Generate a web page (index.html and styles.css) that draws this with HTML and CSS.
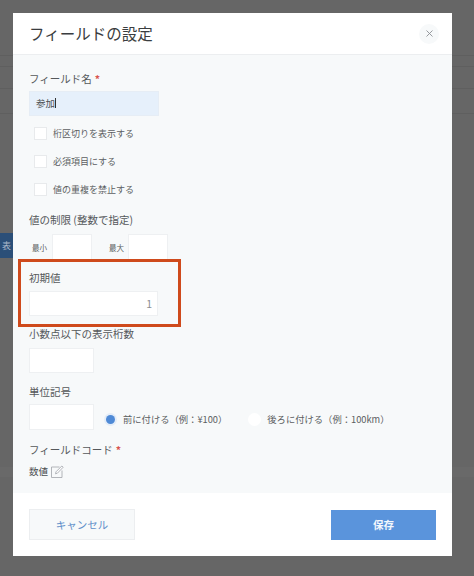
FILE: index.html
```html
<!DOCTYPE html>
<html lang="ja">
<head>
    <meta charset="UTF-8">
    <title>フィールドの設定</title>
    <link rel="stylesheet" href="styles.css">
</head>
<body>

    <!-- 背景の画面 -->
    <div class="backdrop">
        <div class="bg-line bg-line-1"></div>
        <div class="bg-line bg-line-2"></div>
        <div class="bg-line bg-line-5"></div>
        <div class="bg-line bg-line-3"></div>
        <div class="bg-button">表</div>
        <div class="bg-line bg-line-4"></div>
    </div>

    <div class="dialog">
        <div class="dialog-header">
            <h2>フィールドの設定</h2>
            <button class="close-button" aria-label="閉じる">
                <svg width="7" height="7" viewBox="0 0 7 7"><path d="M0.5 0.5L6.5 6.5M6.5 0.5L0.5 6.5" stroke="#8b8f94" stroke-width="0.9" fill="none"/></svg>
            </button>
        </div>

        <div class="dialog-body">
            <div class="label label-name">フィールド名<span class="required">*</span></div>
            <div class="input input-name">参加<span class="caret"></span></div>

            <div class="check-list">
                <div class="check-row"><span class="checkbox"></span>桁区切りを表示する</div>
                <div class="check-row"><span class="checkbox"></span>必須項目にする</div>
                <div class="check-row"><span class="checkbox"></span>値の重複を禁止する</div>
            </div>

            <div class="label label-limit">値の制限 (整数で指定)</div>
            <div class="limit-row">
                <span class="limit-label">最小</span>
                <div class="input input-limit"></div>
                <span class="limit-label limit-label-max">最大</span>
                <div class="input input-limit"></div>
            </div>

            <div class="highlight">
                <div class="label">初期値</div>
                <div class="input input-default">1</div>
            </div>

            <div class="label label-digits">小数点以下の表示桁数</div>
            <div class="input input-short"></div>

            <div class="label label-unit">単位記号</div>
            <div class="unit-row">
                <div class="input input-short"></div>
                <span class="radio radio-on"></span>
                <span class="radio-text">前に付ける（例：¥100）</span>
                <span class="radio"></span>
                <span class="radio-text">後ろに付ける（例：100km）</span>
            </div>

            <div class="label label-code">フィールドコード<span class="required">*</span></div>
            <div class="code-row">
                数値
                <svg class="edit-icon" width="13" height="13" viewBox="0 0 13 13">
                    <path d="M8.5 2H0.5V12.5H11V5.5" stroke="#a9adb2" stroke-width="0.9" fill="none"/>
                    <path d="M4.5 8.8L5 6.8L10.8 1L12.2 2.2L6.4 8.2Z" stroke="#a9adb2" stroke-width="0.9" fill="#fff"/>
                </svg>
            </div>
        </div>

        <div class="dialog-footer">
            <button class="btn btn-cancel">キャンセル</button>
            <button class="btn btn-save">保存</button>
        </div>
    </div>

</body>
</html>
```

FILE: styles.css
```css
* {
    box-sizing: border-box;
}

body {
    margin: 0;
    width: 474px;
    height: 576px;
    overflow: hidden;
    position: relative;
    background-color: #666;
    font-family: 'Noto Sans CJK JP', 'Noto Sans', sans-serif;
    color: #4a4d50;
}

/* 背景 */
.backdrop {
    position: absolute;
    inset: 0;
}

.bg-line {
    position: absolute;
    left: 0;
    right: 0;
    height: 1px;
    background-color: #5f5f5f;
}

.bg-line-1 { top: 55px; }
.bg-line-2 { top: 66px; }
.bg-line-5 { top: 88px; }
.bg-line-3 { top: 113px; }
.bg-line-4 { top: 467px; height: 10px; background-color: #696969; }

.bg-button {
    position: absolute;
    left: 0;
    top: 233px;
    width: 13px;
    height: 25px;
    background-color: #2b4f78;
    color: #a9b8c9;
    font-size: 9px;
    line-height: 25px;
    text-align: center;
}

/* ダイアログ */
.dialog {
    position: absolute;
    left: 13px;
    top: 13px;
    width: 439px;
    height: 543px;
    display: flex;
    flex-direction: column;
    background-color: #fff;
}

.dialog-header {
    height: 42px;
    flex: none;
    display: flex;
    align-items: center;
    justify-content: space-between;
    padding: 0 13px 0 16px;
    border-bottom: 1px solid #eceef0;
}

h2 {
    margin: -1px 0 0;
    font-size: 15.5px;
    font-weight: 400;
    color: #3a3d40;
}

.close-button {
    width: 20px;
    height: 20px;
    padding: 0;
    border: none;
    border-radius: 50%;
    background-color: #f7f9fa;
    display: flex;
    align-items: center;
    justify-content: center;
}

.dialog-body {
    flex: 1;
    padding: 16px 16px 0;
    background-color: #f7f9fa;
}

.label {
    font-size: 10.5px;
    line-height: 16px;
    color: #55585b;
}

.required {
    color: #d9534f;
    font-weight: 700;
    margin-left: 3px;
}

.input {
    background-color: #fff;
    border: 1px solid #eef0f2;
    font-size: 9.5px;
    color: #4a4d50;
}

.input-name {
    width: 130px;
    height: 25px;
    margin-top: 4px;
    padding-left: 6px;
    line-height: 23px;
    background-color: #e6f0fb;
    border-color: #e6edf5;
}

.caret {
    display: inline-block;
    width: 1px;
    height: 10px;
    vertical-align: -1px;
    background-color: #333;
}

.check-list {
    margin-top: 11px;
    display: flex;
    flex-direction: column;
    gap: 15px;
}

.check-row {
    height: 13px;
    padding-left: 5px;
    display: flex;
    align-items: center;
    gap: 6px;
    font-size: 9px;
    color: #5c5f62;
}

.checkbox {
    width: 13px;
    height: 13px;
    background-color: #fff;
    border: 1px solid #e8eaec;
}

.label-limit {
    margin-top: 16px;
}

.limit-row {
    margin-top: 6px;
    display: flex;
    align-items: center;
    height: 26px;
}

.limit-label {
    font-size: 7.5px;
    color: #5c5f62;
    width: 23px;
    padding-left: 3px;
}

.limit-label-max {
    margin-left: 17px;
    width: 19px;
    padding-left: 0;
}

.input-limit {
    width: 40px;
    height: 26px;
}

.highlight {
    position: relative;
    width: 163px;
    height: 68px;
    margin: -1px 0 0 -11px;
    padding: 8px 0 0 11px;
    border: 3px solid #cf4a1c;
}

.highlight .label {
    margin-left: -3px;
}

.input-default {
    width: 129px;
    height: 25px;
    margin: 5px 0 0 -3px;
    padding-right: 5px;
    text-align: right;
    font-size: 10.5px;
    line-height: 23px;
    color: #8b8e91;
}

.label-digits {
    margin-top: -1px;
}

.input-short {
    width: 65px;
    height: 25px;
    margin-top: 6px;
    flex: none;
}

.label-unit {
    margin-top: 11px;
}

.unit-row {
    display: flex;
    align-items: center;
    font-size: 9.3px;
    color: #5c5f62;
    margin-top: 4px;
}

.unit-row .input-short {
    height: 26px;
    margin-top: 0;
    margin-right: 11px;
}

.radio {
    width: 13px;
    height: 13px;
    flex: none;
    border-radius: 50%;
    background-color: #fff;
    margin: 4px 6px 0 0;
}

.radio-on {
    background-color: #4f8ad6;
    box-shadow: 0 0 0 2px #e4edf8;
    width: 9px;
    height: 9px;
    margin-left: 1px;
    margin-right: 8px;
}

.radio-text {
    margin: 4px 21px 0 0;
    white-space: nowrap;
}

.label-code {
    margin-top: 12px;
}

.code-row {
    margin-top: 6px;
    display: flex;
    align-items: center;
    gap: 3px;
    font-size: 9.5px;
    color: #4a4d50;
}

.dialog-footer {
    height: 63px;
    flex: none;
    display: flex;
    justify-content: space-between;
    align-items: center;
    padding: 0 16px;
    background-color: #fff;
}

.btn {
    font-family: inherit;
    font-size: 10.5px;
    height: 31px;
    padding: 0;
    border-radius: 0;
}

.btn-cancel {
    width: 106px;
    background-color: #f7f9fa;
    border: 1px solid #eceef0;
    color: #5f8fc9;
}

.btn-save {
    width: 105px;
    height: 30px;
    background-color: #5a94dc;
    border: none;
    color: #f4f8fd;
    font-weight: 700;
}
```
